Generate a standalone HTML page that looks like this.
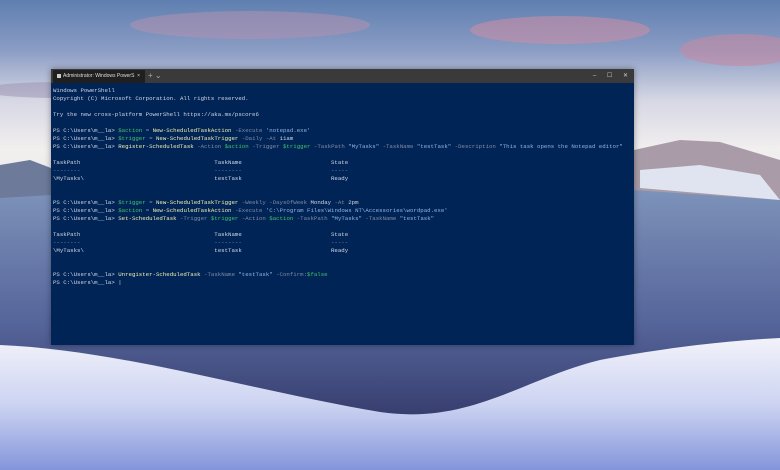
<!DOCTYPE html>
<html><head><meta charset="utf-8"><style>
*{margin:0;padding:0}
body{width:780px;height:470px;overflow:hidden;position:relative;font-family:"Liberation Sans",sans-serif}
#bg{position:absolute;left:0;top:0}
.win{position:absolute;left:51px;top:69px;width:583px;height:276px;background:#012456;box-shadow:0 0 6px rgba(0,0,0,.4)}
.tb{height:14px;background:#3a3a3a;position:relative}
.tab{position:absolute;left:2px;top:1px;width:92px;height:13px;background:#1f1f1f;color:#ddd;font-size:5px;line-height:13px;padding-left:10px;box-sizing:border-box}
.tab:before{content:"";position:absolute;left:4px;top:4px;width:4px;height:4px;background:#ccc}
.tab i{position:absolute;right:5px;top:0;font-style:normal}
.tb .p{position:absolute;left:97px;top:0;color:#aaa;font-size:8px;line-height:14px}
.tb .c{position:absolute;right:6px;top:0;color:#ccc;font-size:6px;line-height:14px;word-spacing:9px}
pre{position:absolute;left:2px;top:18px;font-family:"Liberation Mono",monospace;font-size:5.73px;line-height:8px;color:#d0d6e4}
.y{color:#f0f0b0}.g{color:#3fc46a}.d{color:#7f8ca6}.s{color:#8fb4e0}
</style></head><body>
<svg id="bg" width="780" height="470" viewBox="0 0 780 470">
<defs>
<linearGradient id="sky" x1="0" y1="0" x2="0" y2="1">
<stop offset="0" stop-color="#5f7fb0"/><stop offset=".25" stop-color="#8a9cc4"/><stop offset=".5" stop-color="#d6d7e4"/><stop offset=".75" stop-color="#f2efef"/><stop offset="1" stop-color="#e8e6ea"/></linearGradient>
<linearGradient id="lake" x1="0" y1="0" x2="0" y2="1"><stop offset="0" stop-color="#8096bc"/><stop offset=".6" stop-color="#55649a"/><stop offset="1" stop-color="#353c6c"/></linearGradient>
<linearGradient id="snow" x1="0" y1="0" x2="0" y2="1"><stop offset="0" stop-color="#f2f2fa"/><stop offset=".5" stop-color="#cdd4f2"/><stop offset="1" stop-color="#8495da"/></linearGradient>
</defs>
<rect width="780" height="200" fill="url(#sky)"/>
<ellipse cx="560" cy="30" rx="90" ry="14" fill="#c88ea6" opacity=".6"/>
<ellipse cx="740" cy="50" rx="60" ry="16" fill="#c48aa4" opacity=".6"/>
<ellipse cx="250" cy="25" rx="120" ry="14" fill="#b891b0" opacity=".5"/>
<ellipse cx="60" cy="90" rx="80" ry="8" fill="#9a90b0" opacity=".5"/>
<rect y="180" width="780" height="240" fill="url(#lake)"/>
<path d="M0 165 L30 160 L51 168 L51 195 L0 198Z" fill="#6d7a9a"/>
<path d="M634 150 L680 140 L720 142 L780 160 L780 200 L634 190Z" fill="#a99ca8"/>
<path d="M640 170 L700 165 L760 175 L780 200 L640 188Z" fill="#dfe4f0"/>
<path d="M0 345 C120 350 250 390 380 412 C470 425 520 380 600 360 C680 345 740 340 780 338 L780 470 L0 470Z" fill="url(#snow)"/>
</svg>
<div class="win">
<div class="tb"><div class="tab">Administrator: Windows PowerS<i>×</i></div><span class="p">+ &#8964;</span><span class="c">– ☐ ✕</span></div>
<pre>Windows PowerShell
Copyright (C) Microsoft Corporation. All rights reserved.

Try the new cross-platform PowerShell https://aka.ms/pscore6

PS C:\Users\m__la> <span class="g">$action</span> <span class="d">=</span> <span class="y">New-ScheduledTaskAction</span> <span class="d">-Execute</span> <span class="s">'notepad.exe'</span>
PS C:\Users\m__la> <span class="g">$trigger</span> <span class="d">=</span> <span class="y">New-ScheduledTaskTrigger</span> <span class="d">-Daily -At</span> 11am
PS C:\Users\m__la> <span class="y">Register-ScheduledTask</span> <span class="d">-Action</span> <span class="g">$action</span> <span class="d">-Trigger</span> <span class="g">$trigger</span> <span class="d">-TaskPath</span> <span class="s">"MyTasks"</span> <span class="d">-TaskName</span> <span class="s">"testTask"</span> <span class="d">-Description</span> <span class="s">"This task opens the Notepad editor"</span>

TaskPath                                       TaskName                          State
<span class="d">--------                                       --------                          -----</span>
\MyTasks\                                      testTask                          Ready


PS C:\Users\m__la> <span class="g">$trigger</span> <span class="d">=</span> <span class="y">New-ScheduledTaskTrigger</span> <span class="d">-Weekly -DaysOfWeek</span> Monday <span class="d">-At</span> 2pm
PS C:\Users\m__la> <span class="g">$action</span> <span class="d">=</span> <span class="y">New-ScheduledTaskAction</span> <span class="d">-Execute</span> <span class="s">'C:\Program Files\Windows NT\Accessories\wordpad.exe'</span>
PS C:\Users\m__la> <span class="y">Set-ScheduledTask</span> <span class="d">-Trigger</span> <span class="g">$trigger</span> <span class="d">-Action</span> <span class="g">$action</span> <span class="d">-TaskPath</span> <span class="s">"MyTasks"</span> <span class="d">-TaskName</span> <span class="s">"testTask"</span>

TaskPath                                       TaskName                          State
<span class="d">--------                                       --------                          -----</span>
\MyTasks\                                      testTask                          Ready


PS C:\Users\m__la> <span class="y">Unregister-ScheduledTask</span> <span class="d">-TaskName</span> <span class="s">"testTask"</span> <span class="d">-Confirm:</span><span class="g">$false</span>
PS C:\Users\m__la> |</pre>
</div>
</body></html>
